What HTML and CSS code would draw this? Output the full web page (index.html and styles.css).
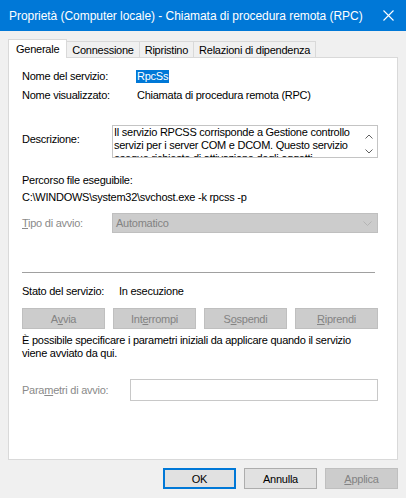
FILE: index.html
```html
<!DOCTYPE html>
<html lang="it">
<head>
    <meta charset="UTF-8">
    <title>Proprietà (Computer locale) - Chiamata di procedura remota (RPC)</title>
    <link rel="stylesheet" href="styles.css">
</head>
<body>
    <div class="titlebar">
        <span class="title">Proprietà (Computer locale) - Chiamata di procedura remota (RPC)</span>
        <svg class="close" width="11" height="11" viewBox="0 0 11 11">
            <path d="M0.5 0.5 L10.5 10.5 M10.5 0.5 L0.5 10.5" stroke="#fff" stroke-width="1.1" fill="none"/>
        </svg>
    </div>

    <div class="tabs">
        <div class="tab active">Generale</div>
        <div class="tab">Connessione</div>
        <div class="tab">Ripristino</div>
        <div class="tab">Relazioni di dipendenza</div>
    </div>

    <div class="panel">
        <div class="info-row first">
            <span>Nome del servizio:</span>
            <span><span class="selected">RpcSs</span></span>
        </div>
        <div class="info-row">
            <span>Nome visualizzato:</span>
            <span>Chiamata di procedura remota (RPC)</span>
        </div>

        <div class="desc-row">
            <span class="desc-label">Descrizione:</span>
            <div class="desc-box">
                <div class="desc-text">Il servizio RPCSS corrisponde a Gestione controllo servizi per i server COM e DCOM. Questo servizio esegue richieste di attivazione degli oggetti</div>
                <div class="scroll">
                    <svg width="8" height="5" viewBox="0 0 8 5"><path d="M0.5 4.5 L4 1 L7.5 4.5" stroke="#606060" fill="none"/></svg>
                    <svg width="8" height="5" viewBox="0 0 8 5"><path d="M0.5 0.5 L4 4 L7.5 0.5" stroke="#606060" fill="none"/></svg>
                </div>
            </div>
        </div>

        <div class="path-label">Percorso file eseguibile:</div>
        <div class="path-value">C:\WINDOWS\system32\svchost.exe -k rpcss -p</div>

        <div class="combo-row">
            <span class="disabled-label"><u>T</u>ipo di avvio:</span>
            <div class="combo">
                <span>Automatico</span>
                <svg width="9" height="5" viewBox="0 0 9 5"><path d="M0.5 0.5 L4.5 4.5 L8.5 0.5" stroke="#b4b4b4" fill="none"/></svg>
            </div>
        </div>

        <div class="separator"></div>

        <div class="status-row">
            <span>Stato del servizio:</span>
            <span>In esecuzione</span>
        </div>

        <div class="service-buttons">
            <button disabled>A<u>v</u>via</button>
            <button disabled>Int<u>e</u>rrompi</button>
            <button disabled>S<u>o</u>spendi</button>
            <button disabled><u>R</u>iprendi</button>
        </div>

        <p class="hint">È possibile specificare i parametri iniziali da applicare quando il servizio viene avviato da qui.</p>

        <div class="params-row">
            <span class="disabled-label">Para<u>m</u>etri di avvio:</span>
            <div class="input"></div>
        </div>
    </div>

    <div class="dialog-buttons">
        <button class="default">OK</button>
        <button>Annulla</button>
        <button disabled><u>A</u>pplica</button>
    </div>
</body>
</html>
```

FILE: styles.css
```css
* {
    box-sizing: border-box;
}

body {
    margin: 0;
    width: 406px;
    height: 498px;
    overflow: hidden;
    background-color: #f0f0f0;
    font-family: "Liberation Sans", Arial, sans-serif;
    font-size: 11px;
    letter-spacing: -0.25px;
    color: #000;
}

u {
    text-decoration-thickness: 1px;
    text-underline-offset: 1px;
}

.titlebar {
    height: 31px;
    background-color: #0078d7;
    color: #fff;
    display: flex;
    align-items: center;
    justify-content: space-between;
    padding: 0 12px 0 9px;
    font-size: 12px;
    letter-spacing: -0.05px;
}

.tabs {
    display: flex;
    align-items: flex-end;
    margin: 8px 0 0 8px;
    position: relative;
    z-index: 1;
}

.tab {
    height: 16px;
    padding: 1px 5px 0;
    line-height: 14px;
    border: 1px solid #d9d9d9;
    border-bottom: none;
    margin-left: -1px;
    background-color: #f0f0f0;
}

.tab.active {
    height: 19px;
    margin: 0 0 -1px 0;
    padding: 2px 7px 0;
    background-color: #fff;
}

.panel {
    margin: 0 8px;
    height: 403px;
    border: 1px solid #d9d9d9;
    background-color: #fff;
    padding: 0 19px 0 13px;
}

.info-row {
    display: grid;
    grid-template-columns: 115px 1fr;
    line-height: 14px;
    margin-top: 5px;
}

.info-row.first {
    margin-top: 11px;
}

.selected {
    background-color: #0078d7;
    color: #fff;
    padding: 0 1px;
    display: inline-block;
    line-height: 13px;
    margin-left: -1px;
}

.desc-row {
    display: grid;
    grid-template-columns: 90px 1fr;
    margin-top: 23px;
}

.desc-label {
    padding-top: 7px;
    line-height: 14px;
}

.desc-box {
    height: 33px;
    border: 1px solid #c4c4c4;
    display: flex;
    overflow: hidden;
}

.desc-text {
    flex: 1;
    height: 31px;
    overflow: hidden;
    padding-left: 1px;
    line-height: 13px;
}

.scroll {
    width: 17px;
    display: flex;
    flex-direction: column;
    align-items: center;
    justify-content: space-between;
    padding: 8px 0 3px;
}

.path-label {
    margin-top: 15px;
    line-height: 14px;
}

.path-value {
    margin-top: 3px;
    line-height: 14px;
}

.combo-row {
    display: grid;
    grid-template-columns: 90px 1fr;
    margin-top: 9px;
}

.disabled-label {
    color: #8a8a8a;
}

.combo-row .disabled-label {
    line-height: 20px;
}

.combo {
    height: 20px;
    border: 1px solid #bfbfbf;
    background-color: #cccccc;
    color: #838383;
    display: flex;
    align-items: center;
    justify-content: space-between;
    padding: 0 5px 0 3px;
}

.separator {
    width: 353px;
    margin-top: 39px;
    border-top: 1px solid #a0a0a0;
}

.status-row {
    display: grid;
    grid-template-columns: 97px 1fr;
    margin-top: 11px;
    line-height: 14px;
}

.service-buttons {
    display: grid;
    grid-template-columns: repeat(4, 1fr);
    gap: 8px;
    margin-top: 10px;
}

button {
    height: 21px;
    font-family: inherit;
    font-size: 11px;
    letter-spacing: -0.25px;
    color: #000;
    background-color: #e1e1e1;
    border: 1px solid #adadad;
    border-radius: 0;
    padding: 0;
}

button:disabled {
    background-color: #cccccc;
    border-color: #bfbfbf;
    color: #838383;
}

button.default {
    border: 2px solid #0078d7;
}

.hint {
    margin: 5px 0 0;
    line-height: 13px;
}

.params-row {
    display: grid;
    grid-template-columns: 108px 1fr;
    margin-top: 19px;
}

.params-row .disabled-label {
    line-height: 22px;
}

.input {
    height: 22px;
    border: 1px solid #c8c8c8;
    background-color: #fff;
}

.dialog-buttons {
    display: flex;
    justify-content: flex-end;
    gap: 8px;
    margin-top: 8px;
    padding-right: 8px;
}

.dialog-buttons button {
    width: 73px;
}
```
